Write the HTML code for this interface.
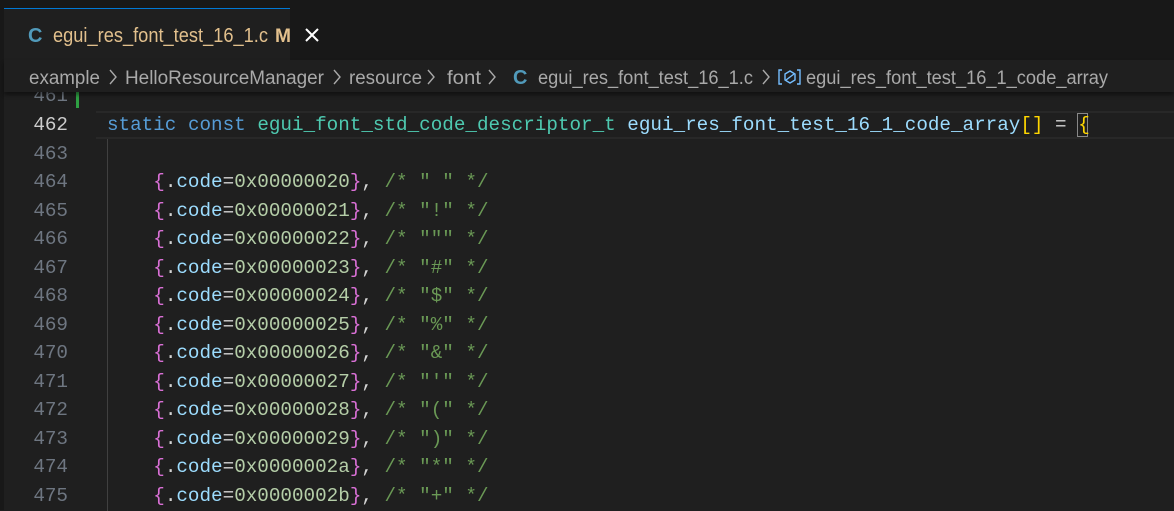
<!DOCTYPE html>
<html><head><meta charset="utf-8"><style>
body{margin:0;width:1174px;height:510px;overflow:hidden;background:#1f1f1f;position:relative;font-family:"Liberation Sans",sans-serif}
.left{position:absolute;left:0;top:0;width:4px;height:510px;background:#181818}
.top{position:absolute;left:0;top:0;width:1174px;height:60px;background:#181818}
.tab{position:absolute;left:4px;top:8px;width:286px;height:52px;background:#1f1f1f;border-top:1px solid #0078d4;box-sizing:border-box}
.crumb{position:absolute;left:4px;top:60px;width:1170px;height:32px;background:#1f1f1f;box-shadow:0 3px 4px rgba(0,0,0,.45);z-index:3}
svg{position:absolute;left:0;top:0;z-index:4}
.code{position:absolute;left:0;top:1px;font-family:"Liberation Mono",monospace;font-size:19.27px}
.ln{position:absolute;left:0;width:68px;text-align:right;color:#6e7681;height:28.5px;line-height:28.5px}
.l{position:absolute;left:107px;white-space:pre;height:28.5px;line-height:28.5px;color:#d4d4d4}
.k{color:#569cd6}.t{color:#4ec9b0}.v{color:#9cdcfe}.y{color:#ffd700}.p{color:#da70d6}.n{color:#b5cea8}.c{color:#6a9955}
</style></head><body>
<div class="top"></div><div class="left"></div>
<div class="tab"></div>
<div class="crumb"></div>
<svg width="1174" height="100" font-family="Liberation Sans, sans-serif" font-size="19">
<text x="28" y="42" fill="#519aba" font-weight="bold" font-size="20">C</text>
<text x="53" y="42" fill="#e2c08d" font-size="20" textLength="215" lengthAdjust="spacingAndGlyphs">egui_res_font_test_16_1.c</text>
<text x="275" y="42" fill="#e2c08d" font-size="19" font-weight="bold" textLength="16" lengthAdjust="spacingAndGlyphs">M</text>
<path d="M306 29 L318 41 M318 29 L306 41" stroke="#fff" stroke-width="2"/>
<g fill="#a9a9a9">
<text x="29" y="84" textLength="71" lengthAdjust="spacingAndGlyphs">example</text>
<text x="125" y="84" textLength="199" lengthAdjust="spacingAndGlyphs">HelloResourceManager</text>
<text x="349" y="84" textLength="73" lengthAdjust="spacingAndGlyphs">resource</text>
<text x="447" y="84" textLength="34" lengthAdjust="spacingAndGlyphs">font</text>
<text x="538" y="84" textLength="215" lengthAdjust="spacingAndGlyphs">egui_res_font_test_16_1.c</text>
<text x="806" y="84" textLength="302" lengthAdjust="spacingAndGlyphs">egui_res_font_test_16_1_code_array</text>
</g>
<g stroke="#a9a9a9" stroke-width="1.4" fill="none">
<path d="M110 70 L116 77 L110 84"/><path d="M334 70 L340 77 L334 84"/><path d="M428 70 L434 77 L428 84"/><path d="M489 70 L495 77 L489 84"/><path d="M763 70 L769 77 L763 84"/>
</g>
<text x="513" y="84" fill="#519aba" font-weight="bold" font-size="20">C</text>
<g stroke="#75beff" stroke-width="1.4" fill="none">
<path d="M782 70 L779 70 L779 84 L782 84"/><path d="M797 70 L800 70 L800 84 L797 84"/>
<path d="M785 74 L790 71 L795 74 L795 80 L790 83 L785 80 Z"/><path d="M786 80 L794 74"/>
</g>
</svg>
<div style="position:absolute;left:76px;top:88px;width:3px;height:20px;background:#2ea043"></div>
<div style="position:absolute;left:96px;top:111px;width:1078px;height:28px;border-top:2px solid #282828;border-bottom:2px solid #282828;box-sizing:border-box"></div>
<div style="position:absolute;left:107px;top:139px;width:1px;height:372px;background:#404040"></div>
<div style="position:absolute;left:1077px;top:113px;width:11px;height:24px;border:1px solid #888;box-sizing:border-box"></div>
<div class="code">
<div class="ln" style="top:81px">461</div>
<div class="ln" style="top:110px;color:#ccc">462</div>
<div class="l" style="top:110px"><span class="k">static</span> <span class="k">const</span> <span class="t">egui_font_std_code_descriptor_t</span> <span class="v">egui_res_font_test_16_1_code_array</span><span class="y">[]</span> = <span class="y">{</span></div>
<div class="ln" style="top:138.5px">463</div>
<div class="ln" style="top:167px">464</div><div class="l" style="top:167px">    <span class="p">{</span>.<span class="v">code</span>=<span class="n">0x00000020</span><span class="p">}</span>, <span class="c">/* " " */</span></div>
<div class="ln" style="top:195.5px">465</div><div class="l" style="top:195.5px">    <span class="p">{</span>.<span class="v">code</span>=<span class="n">0x00000021</span><span class="p">}</span>, <span class="c">/* "!" */</span></div>
<div class="ln" style="top:224px">466</div><div class="l" style="top:224px">    <span class="p">{</span>.<span class="v">code</span>=<span class="n">0x00000022</span><span class="p">}</span>, <span class="c">/* """ */</span></div>
<div class="ln" style="top:252.5px">467</div><div class="l" style="top:252.5px">    <span class="p">{</span>.<span class="v">code</span>=<span class="n">0x00000023</span><span class="p">}</span>, <span class="c">/* "#" */</span></div>
<div class="ln" style="top:281px">468</div><div class="l" style="top:281px">    <span class="p">{</span>.<span class="v">code</span>=<span class="n">0x00000024</span><span class="p">}</span>, <span class="c">/* "$" */</span></div>
<div class="ln" style="top:309.5px">469</div><div class="l" style="top:309.5px">    <span class="p">{</span>.<span class="v">code</span>=<span class="n">0x00000025</span><span class="p">}</span>, <span class="c">/* "%" */</span></div>
<div class="ln" style="top:338px">470</div><div class="l" style="top:338px">    <span class="p">{</span>.<span class="v">code</span>=<span class="n">0x00000026</span><span class="p">}</span>, <span class="c">/* "&amp;" */</span></div>
<div class="ln" style="top:366.5px">471</div><div class="l" style="top:366.5px">    <span class="p">{</span>.<span class="v">code</span>=<span class="n">0x00000027</span><span class="p">}</span>, <span class="c">/* "'" */</span></div>
<div class="ln" style="top:395px">472</div><div class="l" style="top:395px">    <span class="p">{</span>.<span class="v">code</span>=<span class="n">0x00000028</span><span class="p">}</span>, <span class="c">/* "(" */</span></div>
<div class="ln" style="top:423.5px">473</div><div class="l" style="top:423.5px">    <span class="p">{</span>.<span class="v">code</span>=<span class="n">0x00000029</span><span class="p">}</span>, <span class="c">/* ")" */</span></div>
<div class="ln" style="top:452px">474</div><div class="l" style="top:452px">    <span class="p">{</span>.<span class="v">code</span>=<span class="n">0x0000002a</span><span class="p">}</span>, <span class="c">/* "*" */</span></div>
<div class="ln" style="top:480.5px">475</div><div class="l" style="top:480.5px">    <span class="p">{</span>.<span class="v">code</span>=<span class="n">0x0000002b</span><span class="p">}</span>, <span class="c">/* "+" */</span></div>
</div>
</body></html>
